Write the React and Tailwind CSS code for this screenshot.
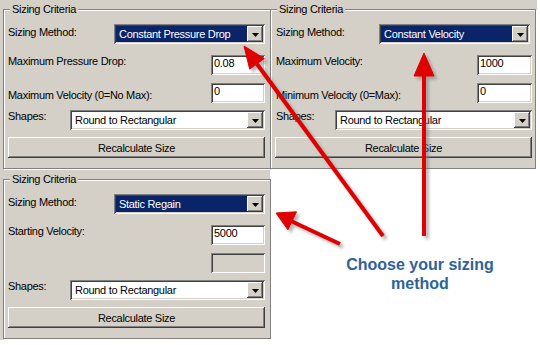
const sunken =
  'shadow-[inset_1px_1px_0_#808080,inset_-1px_-1px_0_#ffffff,inset_2px_2px_0_#404040,inset_-2px_-2px_0_#d4d0c8]';
const raised =
  'shadow-[inset_-1px_-1px_0_#404040,inset_1px_1px_0_#ffffff,inset_-2px_-2px_0_#808080,inset_2px_2px_0_#d4d0c8]';

function Combo({ value, selected, className = '' }) {
  return (
    <div className={`flex h-[20px] shrink-0 bg-white p-[2px] ${sunken} ${className}`}>
      <div className={`flex-1 pl-[3px] pt-[2px] whitespace-nowrap ${selected ? 'bg-[#0a246a] text-white' : ''}`}>
        {value}
      </div>
      <div className={`flex w-[16px] items-center justify-center bg-[#d4d0c8] pt-[1px] ${raised}`}>
        <svg width="7" height="4" viewBox="0 0 7 4">
          <path d="M0 0h7L3.5 4z" fill="#000" />
        </svg>
      </div>
    </div>
  );
}

function TextBox({ value, disabled, className = '' }) {
  return (
    <div className={`h-[20px] shrink-0 pl-[3px] pt-[2px] ${disabled ? 'bg-[#d4d0c8]' : 'bg-white'} ${sunken} ${className}`}>
      {value}
    </div>
  );
}

function Panel({ method, row2, row3, wide }) {
  // wide = right-hand panel, one pixel wider and shifted
  return (
    <div className={`h-[170px] shrink-0 bg-[#d4d0c8] pt-[3px] pr-[1px] ${wide ? 'w-[267px]' : 'w-[270px] pl-[3px]'}`}>
      <fieldset
        className={`w-[266px] border border-[#808080] pt-[8px] pb-[10px] shadow-[inset_1px_1px_0_#ffffff,1px_1px_0_#ffffff] ${
          wide ? 'pl-[5px] pr-[3px]' : 'pl-[4px] pr-[5px]'
        }`}
      >
        <legend className={`bg-[#d4d0c8] px-[2px] ${wide ? 'ml-[1px]' : 'ml-[2px]'}`}>Sizing Criteria</legend>

        <div className="flex h-[20px] items-start justify-between">
          <span className="mt-[2px]">Sizing Method:</span>
          <Combo value={method} selected className={wide ? 'mr-[2px] w-[151px]' : 'w-[151px]'} />
        </div>

        <div className="mt-[11px] flex h-[20px] items-start justify-between">
          <span>{row2.label}</span>
          <TextBox value={row2.value} className={wide ? 'w-[55px]' : 'w-[54px]'} />
        </div>

        <div className="mt-[8px] flex h-[20px] items-end justify-between">
          <span className="mb-[1px]">{row3.label}</span>
          <TextBox value={row3.value} disabled={row3.disabled} className={wide ? 'w-[55px]' : 'w-[54px]'} />
        </div>

        <div className="mt-[7px] flex h-[20px] items-start justify-between">
          <span>Shapes:</span>
          <Combo value="Round to Rectangular" className={wide ? 'w-[197px]' : 'w-[195px]'} />
        </div>

        <div
          className={`mt-[7px] flex h-[21px] w-[257px] shrink-0 justify-center pt-[5px] ${raised} ${wide ? '-ml-[1px]' : ''}`}
        >
          Recalculate Size
        </div>
      </fieldset>
    </div>
  );
}

function Arrows() {
  const shapes = (
    <>
      <line x1="383" y1="236" x2="257" y2="64" strokeWidth="4" />
      <polygon points="244,46 264.3,58.5 249.7,69.1" />
      <line x1="424" y1="236" x2="424" y2="74" strokeWidth="4" />
      <polygon points="424,53 414,76 434,76" />
      <line x1="340" y1="244" x2="291" y2="221" strokeWidth="4" />
      <polygon points="276,213 296.5,211.8 287.9,229.8" />
    </>
  );
  return (
    <svg className="pointer-events-none absolute inset-0" width="540" height="345" viewBox="0 0 540 345">
      <defs>
        <filter id="blur" filterUnits="userSpaceOnUse" x="0" y="0" width="540" height="345">
          <feGaussianBlur stdDeviation="1.6" />
        </filter>
      </defs>
      <g transform="translate(3,3)" filter="url(#blur)" fill="#7a7a7a" stroke="#7a7a7a" opacity="0.55">
        {shapes}
      </g>
      <g fill="#e10000" stroke="#e10000">{shapes}</g>
    </svg>
  );
}

export default function App() {
  return (
    <div className="relative h-[345px] w-[540px] overflow-hidden bg-white font-['Liberation_Sans',Arial,sans-serif] text-[11px] leading-[13px] tracking-[-0.3px] text-black">
      <div className="flex">
        <Panel
          method="Constant Pressure Drop"
          row2={{ label: 'Maximum Pressure Drop:', value: '0.08' }}
          row3={{ label: 'Maximum Velocity (0=No Max):', value: '0' }}
        />
        <Panel
          wide
          method="Constant Velocity"
          row2={{ label: 'Maximum Velocity:', value: '1000' }}
          row3={{ label: 'Minimum Velocity (0=Max):', value: '0' }}
        />
      </div>
      <div className="flex">
        <Panel
          method="Static Regain"
          row2={{ label: 'Starting Velocity:', value: '5000' }}
          row3={{ label: '', value: '', disabled: true }}
        />
        <div className="flex-1 pl-[30px] pt-[85px] text-center text-[16px] leading-[19px] font-bold tracking-normal text-[#2f6398]">
          Choose your sizing
          <br />
          method
        </div>
      </div>
      <Arrows />
    </div>
  );
}
